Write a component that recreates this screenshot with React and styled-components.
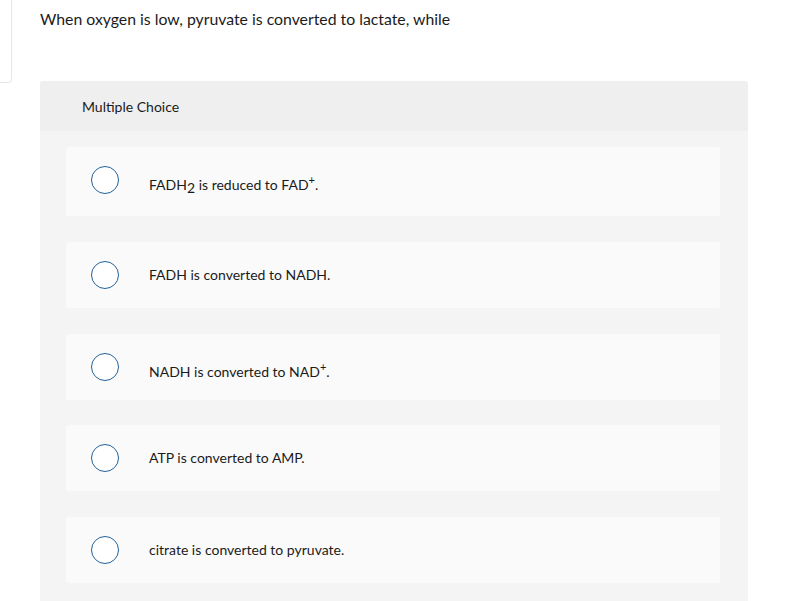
import React from "react";
import styled, { createGlobalStyle } from "styled-components";

const GlobalStyle = createGlobalStyle`
  html, body {
    margin: 0;
    padding: 0;
    background: #fff;
  }
  body {
    font-family: Lato, "Open Sans", Arial, sans-serif;
    color: #1b1b1b;
    -webkit-font-smoothing: antialiased;
  }
`;

const options = [
  { id: "a", text: <>FADH<sub>2</sub> is reduced to FAD<sup>+</sup>.</> },
  { id: "b", text: <>FADH is converted to NADH.</> },
  { id: "c", text: <>NADH is converted to NAD<sup>+</sup>.</> },
  { id: "d", text: <>ATP is converted to AMP.</> },
  { id: "e", text: <>citrate is converted to pyruvate.</> },
];

const App = () => {
  return (
    <Page>
      <GlobalStyle />
      <SideStub />
      <Main>
        <Question>When oxygen is low, pyruvate is converted to lactate, while</Question>
        <Panel>
          <PanelHeader>Multiple Choice</PanelHeader>
          <OptionList>
            {options.map((o) => (
              <Option key={o.id}>
                <Radio />
                <Label>{o.text}</Label>
              </Option>
            ))}
          </OptionList>
        </Panel>
      </Main>
    </Page>
  );
};

const Page = styled.div`
  display: flex;
  align-items: flex-start;
  width: 799px;
  min-height: 601px;
`;

const SideStub = styled.div`
  flex-shrink: 0;
  width: 12px;
  height: 83px;
  border-right: 1px solid #e6e6e6;
  border-bottom: 1px solid #e6e6e6;
  border-bottom-right-radius: 4px;
  box-sizing: border-box;
`;

const Main = styled.div`
  margin-left: 28px;
  width: 708px;
`;

const Question = styled.p`
  margin: 0;
  padding-top: 9px;
  height: 81px;
  box-sizing: border-box;
  font-size: 15.8px;
  line-height: 20px;
  color: #1b1b1b;
`;

const Panel = styled.section`
  background: #f4f4f4;
  border-radius: 3px 3px 0 0;
  padding-bottom: 40px;
`;

const PanelHeader = styled.div`
  height: 50px;
  display: flex;
  align-items: center;
  padding-left: 42px;
  background: #efefef;
  border-radius: 3px 3px 0 0;
  font-size: 14px;
  color: #1b1b1b;
`;

const OptionList = styled.div`
  display: flex;
  flex-direction: column;
  gap: 25.6px;
  padding: 16px 28px 0 26px;
`;

const Option = styled.div`
  display: flex;
  align-items: flex-start;
  padding: 19px 25px;
  background: #fafafa;
  border-radius: 3px;
`;

const Radio = styled.span`
  flex-shrink: 0;
  width: 28px;
  height: 28px;
  box-sizing: border-box;
  border: 1.5px solid #22629a;
  border-radius: 50%;
  background: #fff;
`;

const Label = styled.div`
  margin-left: 30px;
  margin-bottom: -5px;
  font-size: 14px;
  line-height: 28px;
  color: #1b1b1b;

  sub {
    font-size: 14px;
    line-height: 28px;
    vertical-align: sub;
  }
  sup {
    font-size: 11px;
    line-height: 28px;
    vertical-align: super;
  }
`;

export default App;
